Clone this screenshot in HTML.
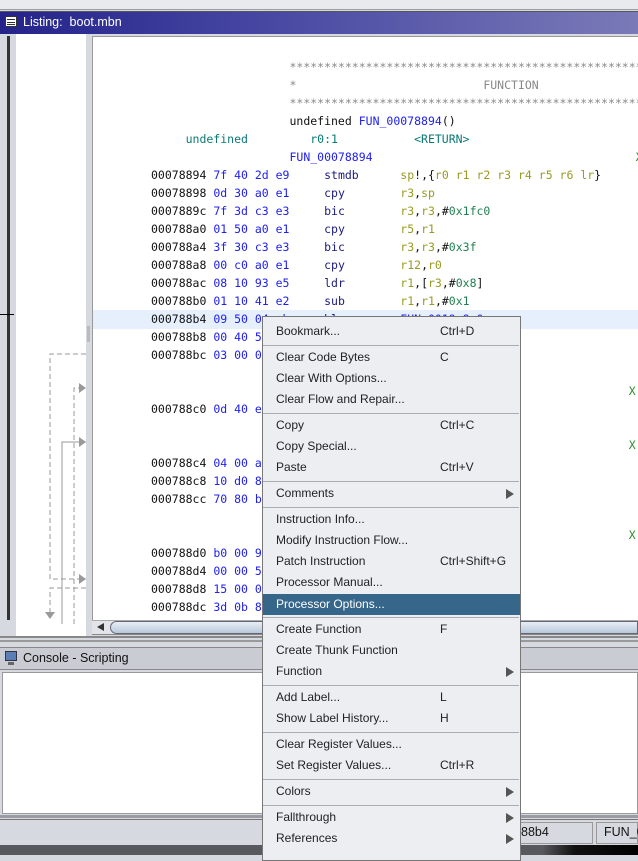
<!DOCTYPE html>
<html><head><meta charset="utf-8"><style>
*{margin:0;padding:0;box-sizing:border-box}
body{width:638px;height:855px;overflow:hidden;position:relative;background:#d6d9e0;font-family:"Liberation Sans",sans-serif}
.a{position:absolute}
.mono{font-family:"DejaVu Sans Mono","Liberation Mono",monospace;font-size:11.5px;white-space:pre;line-height:18px}
.k{color:#111}.b{color:#2020f0}.t{color:#087a74}.o{color:#999a22}.g{color:#2e8b2e}.n{color:#208050}.gr{color:#888}.d{color:#1a1a80}
.mi{position:absolute;left:13px;font-size:12px;color:#222;line-height:21px;height:21px}
.sc{position:absolute;left:177px;font-size:12px;color:#222;line-height:21px}
.sep{position:absolute;left:0;width:256px;height:1px;background:#a9acb3}
.arr{position:absolute;left:243px;width:0;height:0;border-left:8px solid #555;border-top:5px solid transparent;border-bottom:5px solid transparent}
</style></head><body>
<div class="a" style="left:0;top:0;width:638px;height:10px;background:#e8eaee;border-bottom:1px solid #9a9da6"></div>
<div class="a" style="left:0;top:11px;width:638px;height:23px;background:linear-gradient(90deg,#23238a 0%,#4646a2 40%,#7a7ab8 100%);border-top:1px solid #555"></div>
<div class="a" style="left:5px;top:16px;width:12px;height:11px;background:#fff;border:1px solid #333"><div style="margin:2px 1px;height:1px;background:#333"></div><div style="margin:1px 1px;height:1px;background:#333"></div><div style="margin:1px 1px;height:1px;background:#333"></div></div>
<div class="a" style="left:23px;top:15px;color:#fff;font-size:12.5px">Listing:&nbsp; boot.mbn</div>
<div class="a" style="left:0;top:34px;width:16px;height:602px;background:#d6d9e0"></div>
<div class="a" style="left:7px;top:36px;width:3px;height:584px;background:#333"></div>
<div class="a" style="left:0;top:314px;width:14px;height:1px;background:#000"></div>
<div class="a" style="left:16px;top:34px;width:70px;height:602px;background:#fff"></div>
<div class="a" style="left:86px;top:34px;width:6px;height:602px;background:#d6d9e0"></div>
<div class="a" style="left:87px;top:326px;width:3px;height:16px;background:#bbb"></div>
<svg class="a" style="left:16px;top:34px" width="70" height="590">
<g stroke="#999" fill="none" stroke-width="1">
<path d="M70 320 H34 V545 H70" stroke-dasharray="5,3"/>
<path d="M58 590 V354 H70" stroke-dasharray="5,3"/>
<path d="M46 590 V408 H70"/>
<path d="M70 554 H34 V580" stroke-dasharray="5,3"/>
</g>
<g fill="#999"><path d="M63 349 L70 354 L63 359Z"/><path d="M63 403 L70 408 L63 413Z"/><path d="M63 540 L70 545 L63 550Z"/><path d="M29 578 L39 578 L34 585Z"/></g>
</svg>
<div class="a" style="left:92px;top:36px;width:546px;height:584px;background:#fff;border-left:1px solid #999;border-top:1px solid #999;overflow:hidden">
<div class="a" style="left:0;top:273px;width:546px;height:19px;background:#e6f0fc"></div>
<div class="a mono" style="left:58px;top:21px"><span class="gr">                    ****************************************************</span>
<span class="gr">                    *                           FUNCTION</span>
<span class="gr">                    ****************************************************</span>
<span class="k">                    undefined </span><span class="b">FUN_00078894</span><span class="k">()</span>
<span class="t">     undefined         r0:1           &lt;RETURN&gt;</span>
<span class="b">                    FUN_00078894</span><span class="g">                                      X</span>
<span class="k">00078894 </span><span class="b">7f 40 2d e9</span>     <span class="d">stmdb</span>      <span class="o">sp</span><span class="k">!,{</span><span class="o">r0 r1 r2 r3 r4 r5 r6 lr</span><span class="k">}</span>
<span class="k">00078898 </span><span class="b">0d 30 a0 e1</span>     <span class="d">cpy</span>        <span class="o">r3</span><span class="k">,</span><span class="o">sp</span>
<span class="k">0007889c </span><span class="b">7f 3d c3 e3</span>     <span class="d">bic</span>        <span class="o">r3</span><span class="k">,</span><span class="o">r3</span><span class="k">,#</span><span class="n">0x1fc0</span>
<span class="k">000788a0 </span><span class="b">01 50 a0 e1</span>     <span class="d">cpy</span>        <span class="o">r5</span><span class="k">,</span><span class="o">r1</span>
<span class="k">000788a4 </span><span class="b">3f 30 c3 e3</span>     <span class="d">bic</span>        <span class="o">r3</span><span class="k">,</span><span class="o">r3</span><span class="k">,#</span><span class="n">0x3f</span>
<span class="k">000788a8 </span><span class="b">00 c0 a0 e1</span>     <span class="d">cpy</span>        <span class="o">r12</span><span class="k">,</span><span class="o">r0</span>
<span class="k">000788ac </span><span class="b">08 10 93 e5</span>     <span class="d">ldr</span>        <span class="o">r1</span><span class="k">,[</span><span class="o">r3</span><span class="k">,#</span><span class="n">0x8</span><span class="k">]</span>
<span class="k">000788b0 </span><span class="b">01 10 41 e2</span>     <span class="d">sub</span>        <span class="o">r1</span><span class="k">,</span><span class="o">r1</span><span class="k">,#</span><span class="n">0x1</span>
<span class="k">000788b4 </span><span class="b">09 50 04 eb</span>     <span class="d">bl</span>         <span class="b">FUN_0019a8c0</span>
<span class="k">000788b8 </span><span class="b">00 40 50 e2</span>
<span class="k">000788bc </span><span class="b">03 00 00 0a</span>

<span class="g">                                                                     X</span>
<span class="k">000788c0 </span><span class="b">0d 40 e0 e3</span>

<span class="g">                                                                     X</span>
<span class="k">000788c4 </span><span class="b">04 00 a0 e1</span>
<span class="k">000788c8 </span><span class="b">10 d0 8d e2</span>
<span class="k">000788cc </span><span class="b">70 80 bd e8</span>

<span class="g">                                                                     X</span>
<span class="k">000788d0 </span><span class="b">b0 00 95 e1</span>
<span class="k">000788d4 </span><span class="b">00 00 50 e3</span>
<span class="k">000788d8 </span><span class="b">15 00 00 0a</span>
<span class="k">000788dc </span><span class="b">3d 0b 85 e2</span></div>
</div>
<div class="a" style="left:92px;top:620px;width:546px;height:15px;background:#e2e4e8;border-top:1px solid #aaa;border-bottom:1px solid #888"></div>
<div class="a" style="left:97px;top:623px;width:0;height:0;border-right:7px solid #333;border-top:4px solid transparent;border-bottom:4px solid transparent"></div>
<div class="a" style="left:110px;top:621px;width:528px;height:13px;border-radius:7px 0 0 7px;background:linear-gradient(#e8eef6,#b8c8da);border:1px solid #667"></div>
<div class="a" style="left:0;top:636px;width:638px;height:2px;background:#888"></div>
<div class="a" style="left:0;top:640px;width:638px;height:2px;background:#999"></div>
<div class="a" style="left:0;top:647px;width:638px;height:23px;background:#c9ccd3;border-top:1px solid #888;border-bottom:1px solid #888"></div>
<div class="a" style="left:5px;top:651px;width:12px;height:10px;background:#5a7fb6;border:1px solid #334"></div>
<div class="a" style="left:8px;top:662px;width:6px;height:3px;background:#666"></div>
<div class="a" style="left:23px;top:651px;font-size:12.5px;color:#111">Console - Scripting</div>
<div class="a" style="left:2px;top:672px;width:636px;height:142px;background:#fff;border:1px solid #999"></div>
<div class="a" style="left:0;top:815px;width:638px;height:3px;background:#9a9ca4"></div>
<div class="a" style="left:0;top:819px;width:638px;height:26px;background:#d6d9e0;border-top:1px solid #777"></div>
<div class="a" style="left:490px;top:822px;width:103px;height:22px;border:1px solid #999;background:#d6d9e0"></div>
<div class="a" style="left:521px;top:825px;font-size:12.5px;color:#111">88b4</div>
<div class="a" style="left:596px;top:822px;width:42px;height:22px;border:1px solid #999;background:#d6d9e0"></div>
<div class="a" style="left:604px;top:825px;font-size:12.5px;color:#111">FUN_0</div>
<div class="a" style="left:0;top:845px;width:638px;height:10px;background:linear-gradient(90deg,#58595e 0%,#58595e 85%,#111 90%,#000 100%)"></div>
<div class="a" style="left:262px;top:316px;width:259px;height:545px;background:#eceef2;border:1px solid #777">
<div class="mi" style="top:4px">Bookmark...</div><div class="sc" style="top:4px">Ctrl+D</div>
<div class="sep" style="top:28px"></div>
<div class="mi" style="top:30px">Clear Code Bytes</div><div class="sc" style="top:30px">C</div>
<div class="mi" style="top:51px">Clear With Options...</div>
<div class="mi" style="top:72px">Clear Flow and Repair...</div>
<div class="sep" style="top:96px"></div>
<div class="mi" style="top:98px">Copy</div><div class="sc" style="top:98px">Ctrl+C</div>
<div class="mi" style="top:119px">Copy Special...</div>
<div class="mi" style="top:140px">Paste</div><div class="sc" style="top:140px">Ctrl+V</div>
<div class="sep" style="top:164px"></div>
<div class="mi" style="top:166px">Comments</div><div class="arr" style="top:172px"></div>
<div class="sep" style="top:190px"></div>
<div class="mi" style="top:192px">Instruction Info...</div>
<div class="mi" style="top:213px">Modify Instruction Flow...</div>
<div class="mi" style="top:234px">Patch Instruction</div><div class="sc" style="top:234px">Ctrl+Shift+G</div>
<div class="mi" style="top:255px">Processor Manual...</div>
<div class="a" style="left:0;top:277px;width:257px;height:21px;background:#36668a"></div>
<div class="mi" style="top:277px;color:#fff">Processor Options...</div>
<div class="sep" style="top:300px"></div>
<div class="mi" style="top:302px">Create Function</div><div class="sc" style="top:302px">F</div>
<div class="mi" style="top:323px">Create Thunk Function</div>
<div class="mi" style="top:344px">Function</div><div class="arr" style="top:350px"></div>
<div class="sep" style="top:368px"></div>
<div class="mi" style="top:370px">Add Label...</div><div class="sc" style="top:370px">L</div>
<div class="mi" style="top:391px">Show Label History...</div><div class="sc" style="top:391px">H</div>
<div class="sep" style="top:415px"></div>
<div class="mi" style="top:417px">Clear Register Values...</div>
<div class="mi" style="top:438px">Set Register Values...</div><div class="sc" style="top:438px">Ctrl+R</div>
<div class="sep" style="top:462px"></div>
<div class="mi" style="top:464px">Colors</div><div class="arr" style="top:470px"></div>
<div class="sep" style="top:488px"></div>
<div class="mi" style="top:490px">Fallthrough</div><div class="arr" style="top:496px"></div>
<div class="mi" style="top:511px">References</div><div class="arr" style="top:517px"></div>
</div>
</body></html>
